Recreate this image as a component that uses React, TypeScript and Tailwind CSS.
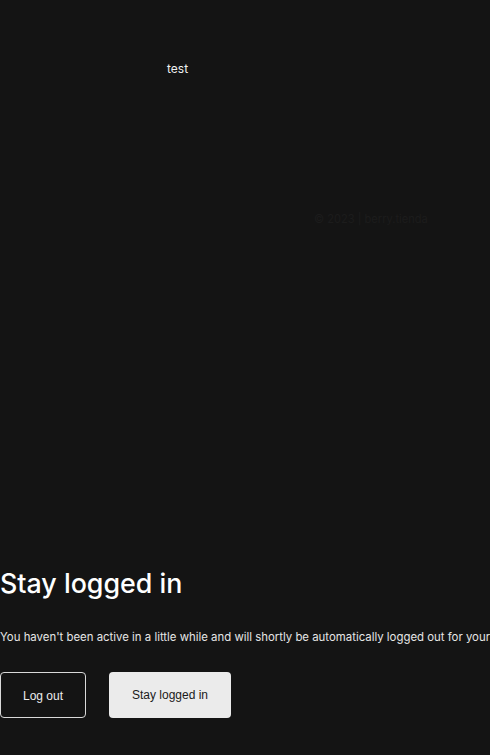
export default function App() {
  return (
    <div
      className="w-[490px] h-[755px] overflow-hidden bg-[#141414] text-white flex flex-col"
      style={{ fontFamily: "Inter, 'Liberation Sans', sans-serif" }}
    >
      <div className="pt-[61px] pl-[167px] text-[12px] leading-[15px] text-[#f0f0f0]">test</div>
      <div className="pt-[136px] pl-[314px] text-[11.1px] leading-[15px] text-[#1c1c1c] whitespace-nowrap">
        © 2023 | berry.tienda
      </div>
      <div className="mt-auto pb-[37px] flex flex-col">
        <h1 className="text-[26.8px] leading-[33px] font-medium text-white whitespace-nowrap">Stay logged in</h1>
        <p className="mt-[30px] text-[11.4px] leading-[15px] text-[#e6e6e6] whitespace-nowrap">
          You haven't been active in a little while and will shortly be automatically logged out for your security.
        </p>
        <div
          className="mt-[27px] flex gap-[23px]"
          style={{ fontFamily: "'Liberation Sans', Arial, sans-serif" }}
        >
          <button className="w-[86px] h-[46px] rounded-[4px] border border-[#d9d9d9] bg-transparent text-[12px] text-[#ececec] pt-[1px]">
            Log out
          </button>
          <button className="w-[122px] h-[46px] rounded-[4px] bg-[#ebebeb] text-[12px] text-[#1a1a1a] pb-[1px]">
            Stay logged in
          </button>
        </div>
      </div>
    </div>
  );
}
